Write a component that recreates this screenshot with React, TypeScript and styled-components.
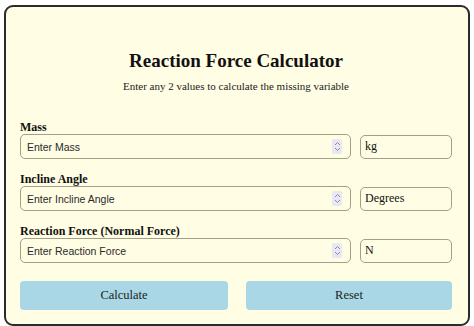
import React, { useState } from "react";
import styled, { createGlobalStyle } from "styled-components";

const GlobalStyle = createGlobalStyle`
  html, body {
    margin: 0;
    padding: 0;
    background: #ffffff;
  }
  body {
    font-family: "Liberation Serif", "Times New Roman", serif;
  }
`;

const Card = styled.div`
  box-sizing: border-box;
  margin: 5px 0 0 4px;
  width: 466px;
  height: 321px;
  border: 2px solid #2b2b2b;
  border-radius: 9px;
  background: #fffde3;
  padding: 43px 16px 0 14px;
  color: #111;
`;

const Title = styled.h1`
  margin: 0;
  text-align: center;
  font-size: 19px;
  line-height: 22px;
  font-weight: bold;
  color: #111;
`;

const Subtitle = styled.p`
  margin: 8px 0 27px;
  text-align: center;
  font-size: 11px;
  line-height: 13px;
  color: #222;
`;

const Group = styled.div`
  margin-bottom: 13px;
`;

const Label = styled.label`
  display: block;
  font-size: 12px;
  line-height: 14px;
  font-weight: bold;
  color: #111;
`;

const Row = styled.div`
  display: flex;
  align-items: center;
  gap: 9px;
`;

const Field = styled.div`
  position: relative;
  flex: 1;
`;

const NumberInput = styled.input`
  box-sizing: border-box;
  width: 100%;
  height: 25px;
  border: 1.5px solid #a3a088;
  border-radius: 5px;
  background: #fffde3;
  padding: 0 24px 0 6px;
  font-family: "Liberation Sans", Arial, sans-serif;
  font-size: 10.5px;
  color: #222;
  outline: none;
  appearance: textfield;
  -moz-appearance: textfield;
  &::-webkit-inner-spin-button,
  &::-webkit-outer-spin-button {
    -webkit-appearance: none;
    margin: 0;
  }
  &::placeholder {
    color: #2a2a2a;
  }
`;

const Spinner = styled.span`
  position: absolute;
  right: 9px;
  top: 5px;
  width: 10px;
  height: 15px;
  background: #e9e7f4;
  border-radius: 2px;
  display: flex;
  align-items: center;
  justify-content: center;
  pointer-events: none;
`;

const Unit = styled.div`
  box-sizing: border-box;
  width: 92px;
  height: 24px;
  border: 1.5px solid #a3a088;
  border-radius: 5px;
  padding: 0 4px;
  display: flex;
  align-items: center;
  font-size: 12px;
  color: #111;
`;

const Buttons = styled.div`
  display: grid;
  grid-template-columns: 208px 206px;
  gap: 18px;
  margin-top: 18px;
`;

const Button = styled.button`
  height: 29px;
  border: none;
  border-radius: 4px;
  background: #a9d7e6;
  font-family: "Liberation Serif", "Times New Roman", serif;
  font-size: 12.5px;
  color: #222;
  cursor: pointer;
`;

const SpinIcon = () => (
  <svg width="7" height="11" viewBox="0 0 7 11">
    <path d="M1 4 L3.5 1.5 L6 4" fill="none" stroke="#8c8a9c" strokeWidth="1" />
    <path d="M1 7 L3.5 9.5 L6 7" fill="none" stroke="#8c8a9c" strokeWidth="1" />
  </svg>
);

type FieldDef = { key: string; label: string; placeholder: string; unit: string };

const fields: FieldDef[] = [
  { key: "mass", label: "Mass", placeholder: "Enter Mass", unit: "kg" },
  { key: "angle", label: "Incline Angle", placeholder: "Enter Incline Angle", unit: "Degrees" },
  { key: "force", label: "Reaction Force (Normal Force)", placeholder: "Enter Reaction Force", unit: "N" },
];

const App: React.FC = () => {
  const [values, setValues] = useState<Record<string, string>>({});

  return (
    <>
      <GlobalStyle />
      <Card>
        <Title>Reaction Force Calculator</Title>
        <Subtitle>Enter any 2 values to calculate the missing variable</Subtitle>
        {fields.map((f) => (
          <Group key={f.key}>
            <Label htmlFor={f.key}>{f.label}</Label>
            <Row>
              <Field>
                <NumberInput
                  id={f.key}
                  type="number"
                  placeholder={f.placeholder}
                  value={values[f.key] || ""}
                  onChange={(e) => setValues({ ...values, [f.key]: e.target.value })}
                />
                <Spinner>
                  <SpinIcon />
                </Spinner>
              </Field>
              <Unit>{f.unit}</Unit>
            </Row>
          </Group>
        ))}
        <Buttons>
          <Button>Calculate</Button>
          <Button onClick={() => setValues({})}>Reset</Button>
        </Buttons>
      </Card>
    </>
  );
};

export default App;
